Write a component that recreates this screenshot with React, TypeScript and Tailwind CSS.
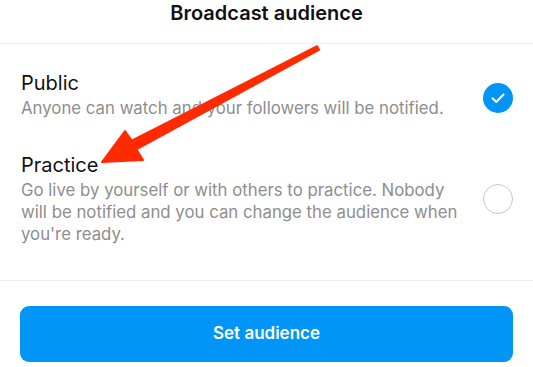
import React from 'react';

const font = { fontFamily: 'Inter, "Liberation Sans", sans-serif' };

const Option: React.FC<{ title: string; text: string; selected?: boolean }> = ({ title, text, selected }) => (
  <div className="flex items-center pl-[21px] pr-5">
    <div className="flex-1 pr-5">
      <div className="text-[20px] leading-[26px] text-[#111]">{title}</div>
      <div className="mt-[1px] text-[16.8px] leading-[22px] text-[#8e8e8e]">{text}</div>
    </div>
    {selected ? (
      <div className="mt-[6px] flex h-[30px] w-[30px] shrink-0 items-center justify-center rounded-full bg-[#0095f6]">
        <svg width="16" height="16" viewBox="0 0 16 16" fill="none">
          <path d="M2.5 8.3 L6.3 12 L13.5 4.5" stroke="white" strokeWidth="2" strokeLinecap="round" strokeLinejoin="round" />
        </svg>
      </div>
    ) : (
      <div className="h-[30px] w-[30px] shrink-0 rounded-full border-[1.5px] border-[#c7c7c7]" />
    )}
  </div>
);

export default function App() {
  return (
    <div className="relative h-[367px] w-[533px] overflow-hidden bg-white" style={font}>
      <div className="h-[44px] border-b border-[#efefef]">
        <div className="pt-[1px] text-center text-[20px] font-semibold leading-[24px] text-[#111]">Broadcast audience</div>
      </div>

      <div className="flex flex-col gap-[33px] border-b border-[#efefef] pt-[26px] pb-[35px]">
        <Option title="Public" text="Anyone can watch and your followers will be notified." selected />
        <Option
          title="Practice"
          text="Go live by yourself or with others to practice. Nobody will be notified and you can change the audience when you're ready."
        />
      </div>

      <div className="px-5 pt-[25px]">
        <button className="flex h-[56px] w-full items-center justify-center rounded-[9px] bg-[#0095f6] text-[17px] font-semibold text-white">
          Set audience
        </button>
      </div>

      <svg className="pointer-events-none absolute left-0 top-0" width="533" height="367" viewBox="0 0 533 367">
        <polygon
          points="102,162 125,131 131.7,140.6 317.1,46.2 318.9,49.8 136.3,149.4 143,160"
          fill="#ff2a00"
          stroke="#ff2a00"
          strokeWidth="2"
          strokeLinejoin="round"
        />
      </svg>
    </div>
  );
}
